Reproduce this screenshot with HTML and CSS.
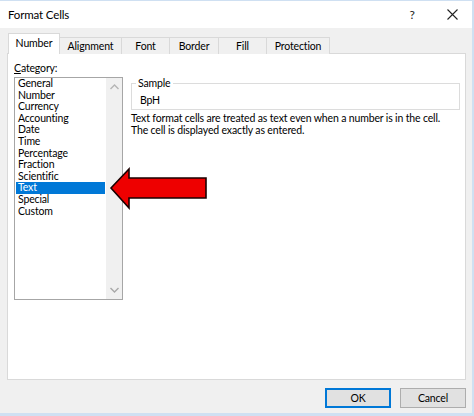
FILE: index.html
```html
<!DOCTYPE html>
<html>
<head>
<meta charset="utf-8">
<link rel="stylesheet" href="styles.css">
</head>
<body>
<div class="window">
  <div class="titlebar">
    <span class="title">Format Cells</span>
    <span class="capbtn help">?</span>
    <span class="capbtn close"><svg width="11" height="11" viewBox="0 0 11 11"><path d="M0.5 0.5 L10.5 10.5 M10.5 0.5 L0.5 10.5" stroke="#222" stroke-width="1.1" fill="none"/></svg></span>
  </div>
  <div class="content">
    <div class="tabs">
      <div class="tab active t-number">Number</div>
      <div class="tab t-align">Alignment</div>
      <div class="tab t-font">Font</div>
      <div class="tab t-border">Border</div>
      <div class="tab t-fill">Fill</div>
      <div class="tab t-prot">Protection</div>
    </div>
    <div class="panel">
      <div class="leftcol">
        <div class="catlabel"><u>C</u>ategory:</div>
        <div class="listbox">
          <ul class="items">
            <li>General</li>
            <li>Number</li>
            <li>Currency</li>
            <li>Accounting</li>
            <li>Date</li>
            <li>Time</li>
            <li>Percentage</li>
            <li>Fraction</li>
            <li>Scientific</li>
            <li class="sel">Text</li>
            <li>Special</li>
            <li>Custom</li>
          </ul>
          <div class="scrollbar">
            <svg class="chev" width="9" height="6" viewBox="0 0 9 6"><path d="M0.5 5 L4.5 1 L8.5 5" stroke="#b5b5b5" stroke-width="1.4" fill="none"/></svg>
            <svg class="chev" width="9" height="6" viewBox="0 0 9 6"><path d="M0.5 1 L4.5 5 L8.5 1" stroke="#a8a8a8" stroke-width="1.4" fill="none"/></svg>
          </div>
        </div>
      </div>
      <div class="rightcol">
        <div class="sample">
          <span class="legend">Sample</span>
          <div class="sampleval">BpH</div>
        </div>
        <p class="desc">Text format cells are treated as text even when a number is in the cell.<br>The cell is displayed exactly as entered.</p>
      </div>
      <svg class="arrow" width="100" height="46" viewBox="0 0 100 46">
        <polygon points="2,22 20,3 20,12 97,12 97,32 20,32 20,42" fill="#ee0000" stroke="#1a0000" stroke-width="1.6" stroke-linejoin="miter"/>
      </svg>
    </div>
    <div class="footer">
      <button class="btn ok">OK</button>
      <button class="btn">Cancel</button>
    </div>
  </div>
</div>
</body>
</html>
```
FILE: styles.css
```css
* { box-sizing: border-box; }
html, body { margin: 0; padding: 0; }
body {
  width: 474px;
  height: 416px;
  overflow: hidden;
  font-family: Lato, "Open Sans", "Liberation Sans", sans-serif;
  font-size: 10.5px;
  letter-spacing: -0.15px;
  color: #000;
  background: #f0f0f0;
}
.window {
  width: 474px;
  height: 416px;
  border-top: 1px solid #cfe0f2;
  border-right: 2px solid #cfe0f2;
  border-bottom: 3px solid #cfe0f2;
  display: flex;
  flex-direction: column;
  background: #f0f0f0;
}
.titlebar {
  height: 27px;
  background: #ffffff;
  display: flex;
  align-items: center;
  padding-left: 8px;
  flex-shrink: 0;
}
.title { font-size: 11.5px; color: #000; flex: 1; padding-bottom: 1px; }
.capbtn {
  width: 40px;
  height: 27px;
  display: flex;
  align-items: center;
  justify-content: center;
  flex-shrink: 0;
}
.help { font-size: 12px; color: #222; }
.content {
  flex: 1;
  display: flex;
  flex-direction: column;
  padding: 6px 6px 0 7px;
}
.tabs {
  display: flex;
  height: 20px;
  align-items: flex-end;
  padding-left: 1px;
  position: relative;
  z-index: 2;
  margin-bottom: -1px;
}
.tab {
  height: 17px;
  border: 1px solid #d9d9d9;
  border-bottom: none;
  border-left: none;
  background: #f0f0f0;
  display: flex;
  align-items: center;
  justify-content: center;
}
.tab.active {
  height: 21px;
  background: #fff;
  border-left: 1px solid #d9d9d9;
  padding-bottom: 2px;
}
.t-number { width: 52px; }
.t-align { width: 62px; }
.t-font { width: 48px; }
.t-border { width: 49px; }
.t-fill { width: 48px; }
.t-prot { width: 63px; }
.panel {
  height: 327px;
  background: #fff;
  border: 1px solid #d9d9d9;
  display: flex;
  padding: 8px 5px 0 6px;
  gap: 8px;
  position: relative;
}
.leftcol { width: 109px; flex-shrink: 0; }
.catlabel { height: 15px; line-height: 13px; }
.listbox {
  height: 223px;
  border: 1px solid #a6a6a6;
  display: flex;
  background: #fff;
}
.items {
  list-style: none;
  margin: 0;
  padding: 0 1px;
  flex: 1;
}
.items li {
  height: 11.6px;
  line-height: 11.6px;
  padding-left: 2px;
  white-space: nowrap;
}
.items li.sel { background: #0078d7; color: #fff; }
.scrollbar {
  width: 16px;
  background: #f0f0f0;
  display: flex;
  flex-direction: column;
  justify-content: space-between;
  align-items: center;
  padding: 6px 0 6px;
}
.rightcol { flex: 1; padding-top: 21px; }
.sample {
  height: 27px;
  border: 1px solid #dcdcdc;
  position: relative;
  padding: 9px 0 0 8px;
}
.legend {
  position: absolute;
  top: -8px;
  left: 4px;
  background: #fff;
  padding: 0 2px;
  line-height: 14px;
}
.sampleval { line-height: 14px; }
.desc {
  margin: 2px 0 0 0;
  line-height: 12px;
  white-space: nowrap;
}
.arrow {
  position: absolute;
  left: 101px;
  top: 112px;
}
.footer {
  display: flex;
  justify-content: flex-end;
  gap: 9px;
  padding-top: 8px;
}
.btn {
  width: 66px;
  height: 20px;
  font-family: inherit;
  font-size: 10.5px;
  letter-spacing: -0.15px;
  background: #e1e1e1;
  border: 1px solid #adadad;
  padding: 0;
  color: #000;
}
.btn.ok { border: 2px solid #0078d7; }
```
